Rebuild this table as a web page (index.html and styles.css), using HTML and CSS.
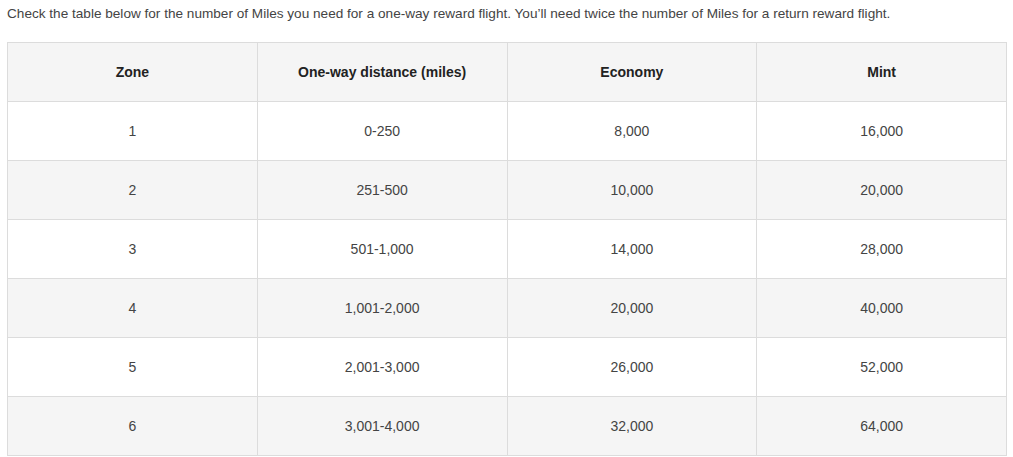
FILE: index.html
```html
<!DOCTYPE html>
<html>
<head>
<meta charset="utf-8">
<link rel="stylesheet" href="styles.css">
</head>
<body>
<p class="intro">Check the table below for the number of Miles you need for a one-way reward flight. You’ll need twice the number of Miles for a return reward flight.</p>
<table class="miles">
<thead>
<tr><th>Zone</th><th>One-way distance (miles)</th><th>Economy</th><th>Mint</th></tr>
</thead>
<tbody>
<tr><td>1</td><td>0-250</td><td>8,000</td><td>16,000</td></tr>
<tr><td>2</td><td>251-500</td><td>10,000</td><td>20,000</td></tr>
<tr><td>3</td><td>501-1,000</td><td>14,000</td><td>28,000</td></tr>
<tr><td>4</td><td>1,001-2,000</td><td>20,000</td><td>40,000</td></tr>
<tr><td>5</td><td>2,001-3,000</td><td>26,000</td><td>52,000</td></tr>
<tr><td>6</td><td>3,001-4,000</td><td>32,000</td><td>64,000</td></tr>
</tbody>
</table>
</body>
</html>
```
FILE: styles.css
```css
html, body { margin: 0; padding: 0; background: #fff; }
body {
  padding: 0 7px;
  font-family: "Liberation Sans", Arial, sans-serif;
  font-size: 14px;
  color: #333;
}
.intro {
  margin: 0;
  padding-top: 6px;
  font-size: 13.6px;
  line-height: 16px;
  color: #444;
}
.miles {
  margin-top: 20px;
  width: 1000px;
  border-collapse: collapse;
  table-layout: fixed;
}
.miles th, .miles td {
  border: 1px solid #dcdcdc;
  height: 58px;
  padding: 0;
  text-align: center;
  vertical-align: middle;
}
.miles th { background: #f5f5f5; font-weight: bold; color: #222; }
.miles td { color: #444; }
.miles tbody tr:nth-child(even) td { background: #f5f5f5; }
```
